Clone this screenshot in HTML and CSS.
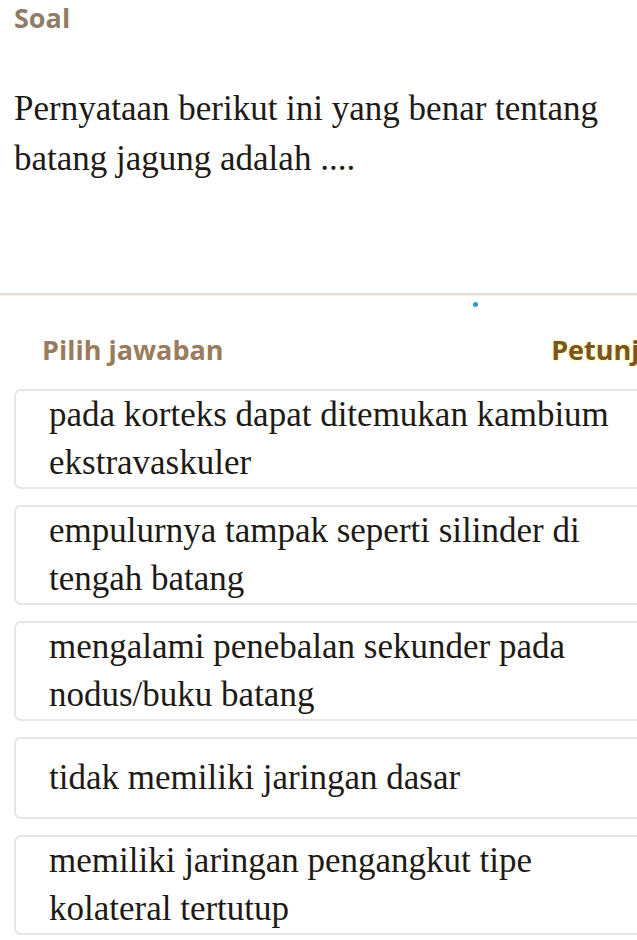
FILE: index.html
```html
<!DOCTYPE html>
<html>
<head>
<meta charset="utf-8">
<link rel="stylesheet" href="styles.css">
</head>
<body>
<div class="page">
  <h1 class="title">Soal</h1>
  <p class="question">Pernyataan berikut ini yang benar tentang batang jagung adalah ....</p>
  <div class="divider"><span class="dot"></span></div>
  <div class="answer-head">
    <span class="pick">Pilih jawaban</span>
    <span class="hint">Petunjuk</span>
  </div>
  <ul class="options">
    <li class="option">pada korteks dapat ditemukan kambium ekstravaskuler</li>
    <li class="option">empulurnya tampak seperti silinder di tengah batang</li>
    <li class="option">mengalami penebalan sekunder pada nodus/buku batang</li>
    <li class="option">tidak memiliki jaringan dasar</li>
    <li class="option">memiliki jaringan pengangkut tipe kolateral tertutup</li>
  </ul>
</div>
</body>
</html>
```
FILE: styles.css
```css
html, body {
  margin: 0;
  padding: 0;
  background: #ffffff;
  overflow: hidden;
}
.page {
  width: 637px;
  height: 940px;
  overflow: hidden;
  position: relative;
}
.title {
  margin: 0;
  padding: 2px 0 0 14px;
  font-family: "Open Sans", sans-serif;
  font-weight: 700;
  font-size: 27px;
  line-height: 32px;
  color: #8e7d66;
}
.question {
  margin: 50px 0 0 0;
  padding: 0 20px 0 14px;
  font-family: "Liberation Serif", serif;
  font-size: 35px;
  line-height: 50px;
  color: #1e1a16;
}
.divider {
  margin-top: 109px;
  height: 2px;
  background: #e2dfd7;
  border-bottom: 1px solid #f3f2ee;
  position: relative;
}
.dot {
  position: absolute;
  left: 473px;
  top: 9px;
  width: 5px;
  height: 5px;
  border-radius: 50%;
  background: #2a9ad6;
}
.answer-head {
  display: flex;
  justify-content: space-between;
  width: 674px;
  padding: 36px 0 0 42px;
  box-sizing: border-box;
  font-family: "Open Sans", sans-serif;
  font-weight: 700;
  font-size: 27px;
  line-height: 36px;
}
.pick {
  color: #9a7c5d;
}
.hint {
  color: #7a5422;
  text-shadow: 0 0 3px #fff28a, 0 0 2px #fff6b0;
}
.options {
  list-style: none;
  margin: 21px 0 0 14px;
  padding: 0;
  width: 700px;
  display: flex;
  flex-direction: column;
  gap: 16px;
}
.option {
  box-sizing: border-box;
  min-height: 82px;
  border: 2px solid #e6e6e4;
  border-radius: 7px;
  padding: 0 100px 0 33px;
  display: flex;
  align-items: center;
  font-family: "Liberation Serif", serif;
  font-size: 35px;
  line-height: 48px;
  color: #1e1a16;
}
```
